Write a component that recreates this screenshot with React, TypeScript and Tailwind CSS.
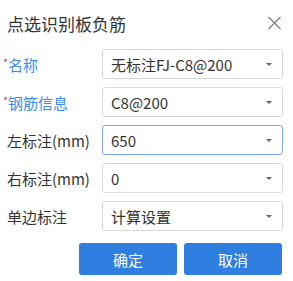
import React from 'react';

const font = { fontFamily: '"Noto Sans CJK SC", "Noto Sans", sans-serif' };

type Row = { label: string; value: string; required?: boolean; focused?: boolean };

const rows: Row[] = [
  { label: '名称', value: '无标注FJ-C8@200', required: true },
  { label: '钢筋信息', value: 'C8@200', required: true },
  { label: '左标注(mm)', value: '650', focused: true },
  { label: '右标注(mm)', value: '0' },
  { label: '单边标注', value: '计算设置' },
];

function Caret() {
  return (
    <svg width="6" height="3" viewBox="0 0 6 3" className="shrink-0 mr-[2px]">
      <path d="M0 0 L6 0 L3 3 Z" fill="#666" />
    </svg>
  );
}

export default function App() {
  return (
    <div className="w-[293px] h-[281px] bg-white relative overflow-hidden" style={font}>
      {/* header */}
      <div className="flex items-center justify-between h-[46px] pl-[7px] pr-[11px] pt-[1px]">
        <span className="text-[17px] leading-none text-[#333]">点选识别板负筋</span>
        <svg width="15" height="14" viewBox="0 0 15 14" className="-mt-[1px]">
          <path d="M1.5 1 L13.5 13 M13.5 1 L1.5 13" stroke="#808080" strokeWidth="1.3" />
        </svg>
      </div>

      {/* form */}
      <div className="flex flex-col gap-[8px] mt-[3px]">
        {rows.map((r) => (
          <div key={r.label} className="flex items-center h-[30px]">
            <div className="w-[102px] flex items-center pl-[3px] shrink-0">
              {r.required ? (
                <>
                  <span className="text-[11px] leading-none text-[#e5413a] w-[5px] -mt-[4px]">*</span>
                  <span className="text-[15px] leading-none text-[#3b8cec]">{r.label}</span>
                </>
              ) : (
                <span className="text-[15px] leading-none text-[#333] pl-[4px]">{r.label}</span>
              )}
            </div>
            <div
              className={`w-[181px] h-[30px] rounded-[3px] border flex items-center justify-between pl-[8px] pr-[8px] ${
                r.focused ? 'border-[#7aa8ee]' : 'border-[#d9d9d9]'
              }`}
            >
              <span className="text-[15px] leading-none text-[#333]">{r.value}</span>
              <Caret />
            </div>
          </div>
        ))}
      </div>

      {/* buttons */}
      <div className="flex justify-end gap-[7px] pr-[11px] mt-[12px]">
        <button className="w-[98px] h-[32px] rounded-[3px] bg-[#2f7fe0] text-white text-[15px] leading-none">
          确定
        </button>
        <button className="w-[98px] h-[32px] rounded-[3px] bg-[#2f7fe0] text-white text-[15px] leading-none">
          取消
        </button>
      </div>
    </div>
  );
}
